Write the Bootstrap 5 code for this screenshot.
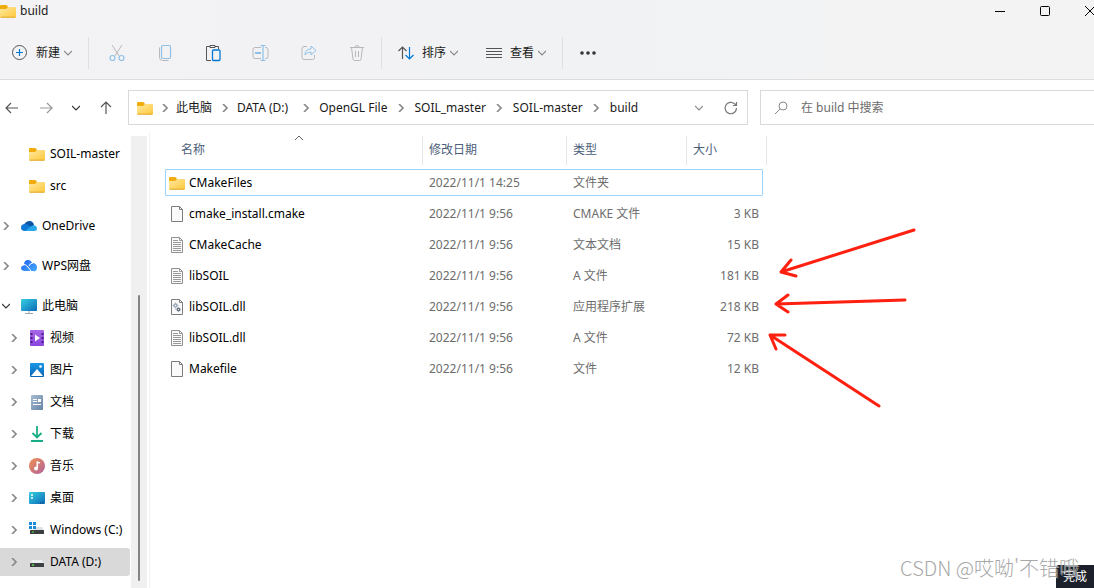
<!DOCTYPE html>
<html lang="zh-CN">
<head>
<meta charset="utf-8">
<meta name="viewport" content="width=device-width, initial-scale=1">
<title>build</title>
<link href="https://cdn.jsdelivr.net/npm/bootstrap@5.3.0/dist/css/bootstrap.min.css" rel="stylesheet">
<style>
  body { font: 12px/16px "Noto Sans", "Noto Sans CJK SC", sans-serif; color: #1a1a1a; background: #fff; overflow-x: hidden; }
  svg { display: block; flex: none; }
  svg:not(.solid) { fill: none; }
  .ico { width: 16px; height: 16px; }
  .chev { width: 8px; height: 8px; stroke: #8a8a8a; }
  .chev-dark { stroke: #333; }
  .app-head { background: linear-gradient(90deg, #f3f2f4, #f1f2f4 50%, #f3f3f3); border-bottom: 1px solid #dcdcdc; }
  .title-row { height: 21px; }
  .win-btns { margin-right: -18px; }
  .win-btn { width: 45px; }
  .plain { border: 0; background: none; padding: 0; color: inherit; display: flex; align-items: center; justify-content: center; }
  .tools { height: 58px; padding: 8px 0 2px; }
  .tool { width: 48px; height: 32px; }
  .tool svg { width: 20px; height: 20px; }
  .tool-sep { width: 1px; height: 32px; background: #e0e0e1; flex: none; }
  .nav-row { padding: 10px 0 7px; }
  .arrows { width: 128px; flex: none; gap: 18px; padding-left: 4px; }
  .addr { flex: 618 1 0; height: 35px; border: 1px solid #d9d9d9; }
  .find { flex: 320 1 0; height: 35px; border: 1px solid #d9d9d9; border-right: 0; margin-left: 12px; padding-left: 13px; }
  .find input { font: inherit; border: 0; outline: 0; width: 100%; margin-left: 11px; padding: 0; }
  .find input::placeholder { color: #6b6b6b; opacity: 1; }
  .crumbs { list-style: none; margin: 0; padding: 0 0 0 8px; white-space: nowrap; }
  .crumbs a, .side a { color: inherit; text-decoration: none; }
  .crumbs .gap { width: 27px; display: flex; justify-content: center; }
  .crumbs .gap:nth-child(2) { width: 23px; }
  .crumbs .gap:nth-child(4) { width: 25px; }
  .side { width: 131px; flex: none; padding-top: 6px; white-space: nowrap; color: #000; display: flex; flex-direction: column; }
  .side a { display: flex; align-items: center; height: 28px; margin: 2px 1px 2px 0; border-radius: 0 3px 3px 0; }
  .side a .chev { margin: 0 6px 0 2px; }
  .side .top-item { margin-top: 10px; }
  .side .top-item .ico { margin: 0 5px; }
  .side .sub .chev, .side .leaf .chev { margin: 0 7px 0 10px; }
  .side .sub .ico, .side .leaf .ico { margin: 0 5px 0 4px; }
  .side .leaf .chev { visibility: hidden; }
  .side .chosen { background: #d9d9d9; }
  .track { width: 16px; flex: none; margin-top: 4px; background: #f0f0f0; }
  .track i { flex: 159; }
  .track i:last-child { flex: 7; }
  .track span { width: 2px; background: #858585; flex: 285; border-radius: 1px; }
  .pane { border-left: 1px solid #f2f2f2; margin-left: 2px; padding-left: 15px; }
  .files { border-collapse: separate; border-spacing: 0 4px; table-layout: fixed; width: 602px; color: #6d6d6d; white-space: nowrap; }
  .c-name { width: 258px; } .c-date { width: 144px; } .c-type { width: 120px; } .c-size { width: 76px; } .c-end { width: 4px; }
  .files th { font-weight: 400; height: 29px; border-right: 1px solid #e5e5e5; color: #4c607a; padding: 0 6px 2px; }
  .files th:first-child { padding-left: 16px; }
  .files td { height: 27px; padding: 0 6px; border: 0 solid #99d1ff; }
  .files td:first-child { padding-left: 4px; color: #000; }
  .files td:nth-child(4) { padding: 0 4px 0 0; text-align: right; }
  .files td:last-child { padding: 0; }
  .files .focus td { border-width: 1px 0; }
  .files .focus td:first-child { border-left-width: 1px; padding-left: 3px; border-radius: 2px 0 0 2px; }
  .files .focus td:nth-child(4) { border-right-width: 1px; border-radius: 0 2px 2px 0; }
  .files .focus td:last-child { border: 0; }
  .sort-mark { left: 129px; top: 0; }
  .marks { left: 600px; top: 88px; pointer-events: none; }
  .done { right: 0; bottom: 0; width: 38px; height: 23px; background: #1b202b; color: #fff; border-radius: 3px 0 0 0; }
  .stamp { right: 15px; bottom: 7px; font: 300 20px/26px "Noto Sans CJK SC", sans-serif; color: #a8a8a8; text-shadow: 1px 1px 0 #fff8; white-space: nowrap; }
</style>
</head>
<body>
<svg width="0" height="0" class="position-absolute solid" aria-hidden="true">
  <defs>
    <linearGradient id="gFold" x1="0" y1="0" x2="1" y2="1"><stop stop-color="#ffe9a0"/><stop offset="1" stop-color="#fdc83d"/></linearGradient>
    <linearGradient id="gBlue" x1="0" y1="0" x2="1" y2="1"><stop stop-color="#35d0e0"/><stop offset="1" stop-color="#0b69b8"/></linearGradient>
    <linearGradient id="gPic" x1="0" y1="0" x2="0" y2="1"><stop stop-color="#1a9ae8"/><stop offset="1" stop-color="#0a62b5"/></linearGradient>
    <linearGradient id="gVid" x1="0" y1="0" x2="0" y2="1"><stop stop-color="#a767e8"/><stop offset="1" stop-color="#8a45e0"/></linearGradient>
    <linearGradient id="gDoc" x1="0" y1="0" x2="1" y2="1"><stop stop-color="#a9bdd3"/><stop offset="1" stop-color="#6684a6"/></linearGradient>
    <linearGradient id="gMus" x1="0" y1="0" x2="1" y2="1"><stop stop-color="#f09150"/><stop offset="1" stop-color="#b0609f"/></linearGradient>
    <linearGradient id="gWps" x1="0" y1="0" x2="1" y2="1"><stop stop-color="#1b62f0"/><stop offset="1" stop-color="#48aaff"/></linearGradient>
  </defs>
  <symbol id="folder" viewBox="0 0 16 16"><path d="M0 3q0-1 1-1h5q1 0 2 2v3H0z" fill="#f0ab0c"/><path d="M0 6h6l2-2h7q1 0 1 1v8.500q0 1-1 1H1q-1 0-1-1z" fill="url(#gFold)"/><path d="M.5 14.200h15" stroke="#e3a522"/></symbol>
  <symbol id="right" viewBox="0 0 8 8"><path d="M2 0l4 4-4 4" stroke-width="1.700"/></symbol>
  <symbol id="down" viewBox="0 0 8 8"><path d="M0 2l4 4 4-4" stroke-width="1.200"/></symbol>
  <symbol id="blank" viewBox="0 0 16 16"><path d="M2.500.5h8l3 3v12h-11z" fill="#fafafa" stroke="#7d7d7d"/><path d="M10.500.5v3h3" stroke="#7d7d7d"/></symbol>
  <symbol id="lines" viewBox="0 0 16 16"><path d="M2.500.5h8l3 3v12h-11z" fill="#fafafa" stroke="#909090"/><path d="M10.500.5v3h3M4 3.500h5M4 5.500h8M4 7.500h8M4 9.500h8M4 11.500h8M4 13.500h8" stroke="#999"/></symbol>
  <symbol id="dll" viewBox="0 0 16 16"><path d="M2.500.5h8l3 3v12h-11z" fill="#fafafa" stroke="#7d7d7d"/><path d="M10.500.5v3h3" stroke="#7d7d7d"/><circle cx="6.500" cy="6.500" r="1.500" stroke="#9aa9ba" stroke-width="1.600"/><circle cx="9.500" cy="10.500" r="1.300" stroke="#66727f" stroke-width="1.400"/><path d="M6.500 3.500v1m0 4v1m-3-3h1m4 0h1M9.500 8v1m0 3v1m-3-2.500h1m3.500 0h1" stroke="#9ba8b5"/></symbol>
  <symbol id="disk" viewBox="0 0 16 16"><path d="M3 6h10l2 4H1z" fill="#eceef0"/><rect x="1" y="9" width="14" height="4" rx=".5" fill="#3c3f41"/><path d="M3 11h2" stroke="#55dc51" stroke-width="1.300"/></symbol>
</svg>

<div class="d-flex flex-column min-vh-100 position-relative">
  <header class="app-head">
    <div class="title-row d-flex align-items-center overflow-hidden">
      <svg class="ico ms-n1"><use href="#folder"/></svg><span class="ms-1">build</span>
      <div class="win-btns d-flex ms-auto h-100">
        <button class="plain win-btn" aria-label="最小化"><svg width="10" height="10" stroke="#000"><path d="M0 5.500h10"/></svg></button>
        <button class="plain win-btn" aria-label="最大化"><svg width="10" height="10" stroke="#000"><rect x=".5" y=".5" width="9" height="9" rx="1"/></svg></button>
        <button class="plain win-btn" aria-label="关闭"><svg width="10" height="10" stroke="#000"><path d="M0 0l10 10M10 0L0 10"/></svg></button>
      </div>
    </div>
    <div class="tools d-flex align-items-center text-nowrap">
      <button class="plain ps-2 ms-1"><svg width="16" height="16" viewBox="0 0 16 16"><circle cx="7.500" cy="7.500" r="7" stroke="#555"/><path d="M7.500 4v7M4 7.500h7" stroke="#0078d4" stroke-width="1.200"/></svg><span class="ms-2">新建</span><svg class="chev ms-1 me-3"><use href="#down"/></svg></button>
      <span class="tool-sep me-1"></span>
      <button class="plain tool" aria-label="剪切"><svg viewBox="0 0 20 20"><path d="M5 2l7.500 11.500M15 2L7.500 13.500" stroke="#b7b9bc"/><circle cx="5.500" cy="15" r="2.500" stroke="#8fc1e8" stroke-width="1.200"/><circle cx="14.500" cy="15" r="2.500" stroke="#8fc1e8" stroke-width="1.200"/></svg></button>
      <button class="plain tool" aria-label="复制"><svg viewBox="0 0 20 20"><path d="M4.500 4.500v10q0 3 3 3h6" stroke="#b7b9bc"/><rect x="6.500" y="2.500" width="9" height="13" rx="1.500" stroke="#8fc1e8" stroke-width="1.200"/></svg></button>
      <button class="plain tool" aria-label="粘贴"><svg viewBox="0 0 20 20"><path d="M7 3.500H3.500v14H8M12 3.500h3.500V6M7 2.500h5v2H7z" stroke="#555"/><rect x="9.500" y="7" width="7.500" height="10.500" rx="1" stroke="#0078d4" stroke-width="1.300"/></svg></button>
      <button class="plain tool" aria-label="重命名"><svg viewBox="0 0 20 20"><path d="M10 4.500H4q-2 0-2 2v7q0 2 2 2h6M14 4.500h1q2 0 2 2v7q0 2-2 2h-1" stroke="#b7b9bc"/><path d="M12 2.500v15M9.500 2.500h5M9.500 17.500h5" stroke="#8fc1e8" stroke-width="1.200"/><path d="M4 10h6" stroke="#8fc1e8" stroke-width="2"/></svg></button>
      <button class="plain tool" aria-label="共享"><svg viewBox="0 0 20 20"><path d="M8 3.500H5q-2 0-2 2v9q0 2 2 2h8.500q2 0 2-2V12" stroke="#b7b9bc"/><path d="M6 12q0-6 6-6V3l5 4.500-5 4.500V9q-4 0-6 3z" stroke="#8fc1e8" stroke-linejoin="round"/></svg></button>
      <button class="plain tool" aria-label="删除"><svg viewBox="0 0 20 20" stroke="#b7b9bc"><path d="M3 4.500h14M4.500 4.500L6 16q0 1.500 1.500 1.500h5q1.500 0 1.500-1.500l1.500-11.500M8 4.500q0-2 2-2t2 2M8.500 8v6M11.500 8v6"/></svg></button>
      <span class="tool-sep me-3"></span>
      <button class="plain"><svg width="16" height="16" stroke-width="1.200"><path d="M4.500 14V2M.5 6l4-4 4 4" stroke="#555"/><path d="M11.500 2v12M7.500 10l4 4 4-4" stroke="#0078d4"/></svg><span class="ms-2">排序</span><svg class="chev mx-1"><use href="#down"/></svg></button>
      <button class="plain ms-4"><svg width="16" height="16" stroke="#555"><path d="M0 3.500h16M0 6.500h16M0 9.500h16M0 12.500h16"/></svg><span class="ms-2">查看</span><svg class="chev ms-1"><use href="#down"/></svg></button>
      <span class="tool-sep ms-3 me-3"></span>
      <button class="plain" aria-label="更多"><svg class="solid" width="18" height="16" fill="#333"><circle cx="3" cy="8" r="1.800"/><circle cx="9" cy="8" r="1.800"/><circle cx="15" cy="8" r="1.800"/></svg></button>
    </div>
  </header>

  <div class="nav-row d-flex align-items-center">
    <div class="arrows d-flex align-items-center">
      <button class="plain" aria-label="后退"><svg class="ico" stroke="#555" stroke-width="1.200"><path d="M14 8H2M7 3L2 8l5 5"/></svg></button>
      <button class="plain" aria-label="前进"><svg class="ico" stroke="#999" stroke-width="1.200"><path d="M2 8h12M9 3l5 5-5 5"/></svg></button>
      <button class="plain" aria-label="最近的位置"><svg class="chev chev-dark"><use href="#down"/></svg></button>
      <button class="plain" aria-label="上移"><svg class="ico" stroke="#555" stroke-width="1.200"><path d="M8 14V2M3 7l5-5 5 5"/></svg></button>
    </div>
    <nav class="addr d-flex align-items-center" aria-label="地址">
      <ol class="crumbs d-flex align-items-center">
        <li><svg class="ico"><use href="#folder"/></svg></li>
        <li class="gap"><svg class="chev"><use href="#right"/></svg></li><li><a href="#">此电脑</a></li>
        <li class="gap"><svg class="chev"><use href="#right"/></svg></li><li class="me-1"><a href="#">DATA (D:)</a></li>
        <li class="gap"><svg class="chev"><use href="#right"/></svg></li><li><a href="#">OpenGL File</a></li>
        <li class="gap"><svg class="chev"><use href="#right"/></svg></li><li><a href="#">SOIL_master</a></li>
        <li class="gap"><svg class="chev"><use href="#right"/></svg></li><li><a href="#">SOIL-master</a></li>
        <li class="gap"><svg class="chev"><use href="#right"/></svg></li><li><a href="#">build</a></li>
      </ol>
      <button class="plain ms-auto me-3" aria-label="历史记录"><svg class="chev"><use href="#down"/></svg></button>
      <button class="plain me-2 ms-1" aria-label="刷新"><svg class="ico" stroke="#777" stroke-width="1.200"><path d="M13.500 8A5.700 5.700 0 1 1 11.500 3.700L13.300 5M13.500 2v3.500H10"/></svg></button>
    </nav>
    <div class="find d-flex align-items-center">
      <svg class="ico" stroke="#888"><circle cx="9" cy="6" r="4"/><path d="M6 9l-5 5"/></svg>
      <input type="search" aria-label="搜索" placeholder="在 build 中搜索">
    </div>
  </div>

  <main class="d-flex flex-grow-1">
    <nav class="side" aria-label="导航窗格">
      <a class="leaf" href="#"><svg class="chev"><use href="#right"/></svg><svg class="ico"><use href="#folder"/></svg>SOIL-master</a>
      <a class="leaf" href="#"><svg class="chev"><use href="#right"/></svg><svg class="ico"><use href="#folder"/></svg>src</a>
      <a class="top-item" href="#"><svg class="chev"><use href="#right"/></svg><svg class="ico" viewBox="0 0 16 16"><path d="M3 7q2-4 5.500-4 3.500 0 4.500 4l-3 4z" fill="#0a55a5"/><path d="M4 13q-4 0-4-3.500T4 6q3 0 6 3l3 4z" fill="#0f78d4"/><path d="M4 13l5-4q3-2.500 5-1.500 2 1 2 3T14 13z" fill="#28a8ea"/></svg>OneDrive</a>
      <a class="top-item" href="#"><svg class="chev"><use href="#right"/></svg><svg class="ico" viewBox="0 0 16 16"><path d="M3 7q0-5 4-5 3 0 4 3 5 0 5 4.500T12 13H4Q0 13 0 10q0-2 3-3z" fill="url(#gWps)"/><path d="M1 7q3-2 6 2l3 4M8 8q1-3 4-3" stroke="#fff"/></svg>WPS网盘</a>
      <a class="top-item" href="#"><svg class="chev chev-dark"><use href="#down"/></svg><svg class="ico" viewBox="0 0 16 16"><rect y="1" width="16" height="12" rx="1" fill="url(#gBlue)"/><path d="M8 13v2M4 15.500h8" stroke="#9aa5ad"/></svg>此电脑</a>
      <a class="sub" href="#"><svg class="chev"><use href="#right"/></svg><svg class="ico" viewBox="0 0 16 16"><rect x="1" width="14" height="16" rx="1" fill="url(#gVid)"/><path d="M2.500 3v11M13.500 3v11" stroke="#48217d" stroke-width="2" stroke-dasharray="2 2"/><path d="M6 4.500l5 3.500-5 3.500z" fill="#fff"/></svg>视频</a>
      <a class="sub" href="#"><svg class="chev"><use href="#right"/></svg><svg class="ico" viewBox="0 0 16 16"><rect x="1" y="1" width="14" height="14" rx="1" fill="url(#gPic)"/><path d="M2 14l6-7 6 7z" fill="#fff"/><circle cx="11.500" cy="4.500" r="1.300" fill="#fff"/></svg>图片</a>
      <a class="sub" href="#"><svg class="chev"><use href="#right"/></svg><svg class="ico" viewBox="0 0 16 16"><rect x="2" y="1" width="12" height="15" rx="1" fill="url(#gDoc)"/><path d="M4 5.500h4M4 7.500h4M4 10.500h8" stroke="#fff"/><rect x="9" y="5" width="3" height="3" fill="#fff"/></svg>文档</a>
      <a class="sub" href="#"><svg class="chev"><use href="#right"/></svg><svg class="ico" viewBox="0 0 16 16" stroke="#19ae86" stroke-width="1.800"><path d="M8 0v11M3.500 7L8 11.500 12.500 7M2 15h12"/></svg>下载</a>
      <a class="sub" href="#"><svg class="chev"><use href="#right"/></svg><svg class="ico" viewBox="0 0 16 16"><circle cx="8" cy="8" r="8" fill="url(#gMus)"/><circle cx="7" cy="10.500" r="2" fill="#fff"/><path d="M8.300 10.500V4l2.500 1" stroke="#fff" stroke-width="1.500"/></svg>音乐</a>
      <a class="sub" href="#"><svg class="chev"><use href="#right"/></svg><svg class="ico" viewBox="0 0 16 16"><rect y="2" width="16" height="12" rx="1" fill="url(#gBlue)"/><path d="M2 5h2M2 8h2" stroke="#fff" stroke-width="1.700"/><path d="M11 13h1m1 0h1" stroke="#0a3d66"/></svg>桌面</a>
      <a class="sub" href="#"><svg class="chev"><use href="#right"/></svg><svg class="ico" viewBox="0 0 16 16"><path d="M6 5h7l2 4H5z" fill="#dddfe1"/><rect x="1" y="8" width="14" height="4" rx=".5" fill="#3c3f41"/><path d="M3 10h2" stroke="#55dc51"/><path d="M0 0h3v3H0zM4 0h3v3H4zM0 4h3v3H0zM4 4h3v3H4z" fill="#1989dc"/></svg>Windows (C:)</a>
      <a class="sub chosen" href="#"><svg class="chev"><use href="#right"/></svg><svg class="ico"><use href="#disk"/></svg>DATA (D:)</a>
    </nav>
    <div class="track d-flex flex-column align-items-center"><i></i><span></span><i></i></div>

    <section class="pane flex-grow-1">
      <div class="position-relative">
        <table class="files">
          <colgroup><col class="c-name"><col class="c-date"><col class="c-type"><col class="c-size"><col class="c-end"></colgroup>
          <thead><tr><th scope="col">名称</th><th scope="col">修改日期</th><th scope="col">类型</th><th scope="col" colspan="2">大小</th></tr></thead>
          <tbody>
            <tr class="focus"><td><span class="d-flex align-items-center gap-1"><svg class="ico"><use href="#folder"/></svg>CMakeFiles</span></td><td>2022/11/1 14:25</td><td>文件夹</td><td></td><td></td></tr>
            <tr><td><span class="d-flex align-items-center gap-1"><svg class="ico"><use href="#blank"/></svg>cmake_install.cmake</span></td><td>2022/11/1 9:56</td><td>CMAKE 文件</td><td>3 KB</td><td></td></tr>
            <tr><td><span class="d-flex align-items-center gap-1"><svg class="ico"><use href="#lines"/></svg>CMakeCache</span></td><td>2022/11/1 9:56</td><td>文本文档</td><td>15 KB</td><td></td></tr>
            <tr><td><span class="d-flex align-items-center gap-1"><svg class="ico"><use href="#lines"/></svg>libSOIL</span></td><td>2022/11/1 9:56</td><td>A 文件</td><td>181 KB</td><td></td></tr>
            <tr><td><span class="d-flex align-items-center gap-1"><svg class="ico"><use href="#dll"/></svg>libSOIL.dll</span></td><td>2022/11/1 9:56</td><td>应用程序扩展</td><td>218 KB</td><td></td></tr>
            <tr><td><span class="d-flex align-items-center gap-1"><svg class="ico"><use href="#lines"/></svg>libSOIL.dll</span></td><td>2022/11/1 9:56</td><td>A 文件</td><td>72 KB</td><td></td></tr>
            <tr><td><span class="d-flex align-items-center gap-1"><svg class="ico"><use href="#blank"/></svg>Makefile</span></td><td>2022/11/1 9:56</td><td>文件</td><td>12 KB</td><td></td></tr>
          </tbody>
        </table>
        <svg class="sort-mark position-absolute" width="10" height="10" stroke="#666"><path d="M1 8l4-4 4 4"/></svg>
        <svg class="marks position-absolute" width="160" height="200" stroke="#ff2010" stroke-width="3" stroke-linecap="round" stroke-linejoin="round"><path d="M149 10L16 52M26 40L16 52l15 4M140 80L11 84M23 75L11 84l12 8M114 186L5 115M20 115H5l6 14"/></svg>
      </div>
    </section>
  </main>

  <div class="done position-absolute d-flex align-items-center justify-content-center">完成</div>
  <div class="stamp position-absolute">CSDN @哎呦'不错哦</div>
</div>
<script src="https://cdn.jsdelivr.net/npm/bootstrap@5.3.0/dist/js/bootstrap.bundle.min.js"></script>
</body>
</html>
